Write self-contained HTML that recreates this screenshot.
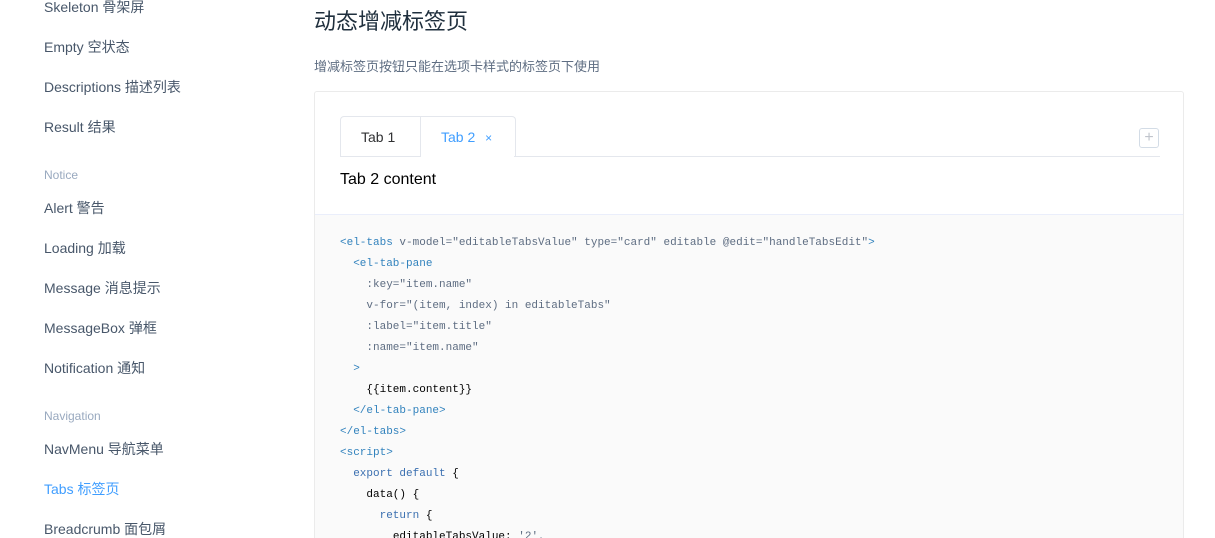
<!DOCTYPE html>
<html><head><meta charset="utf-8"><style>
html,body{margin:0;width:1215px;height:538px;overflow:hidden}
body{background:#fff;font-family:"Liberation Sans","Noto Sans CJK SC",sans-serif;position:relative}
.s{position:absolute;left:44px;font-size:14px;color:#48576a;line-height:20px}
.g{position:absolute;left:44px;font-size:12px;color:#99a9bf;line-height:16px}
.code{position:absolute;left:340px;top:233px;font-family:"Liberation Mono","DejaVu Sans Mono",monospace;font-size:11px;line-height:21px;color:#5e6d82;white-space:pre}
.t{color:#3182bd}.k{color:#3a6fb0}.b{color:#000}.v{color:#5e6d82}
</style></head><body>
<div class="s" style="top:-3px">Skeleton 骨架屏</div>
<div class="s" style="top:37px">Empty 空状态</div>
<div class="s" style="top:77px">Descriptions 描述列表</div>
<div class="s" style="top:117px">Result 结果</div>
<div class="g" style="top:167px">Notice</div>
<div class="s" style="top:198px">Alert 警告</div>
<div class="s" style="top:238px">Loading 加载</div>
<div class="s" style="top:278px">Message 消息提示</div>
<div class="s" style="top:318px">MessageBox 弹框</div>
<div class="s" style="top:358px">Notification 通知</div>
<div class="g" style="top:408px">Navigation</div>
<div class="s" style="top:439px">NavMenu 导航菜单</div>
<div class="s" style="top:479px;color:#409eff">Tabs 标签页</div>
<div class="s" style="top:519px">Breadcrumb 面包屑</div>

<div style="position:absolute;left:314px;top:6px;font-size:22px;color:#1f2f3d;line-height:32px">动态增减标签页</div>
<div style="position:absolute;left:314px;top:58px;font-size:13px;color:#5e6d82;line-height:18px">增减标签页按钮只能在选项卡样式的标签页下使用</div>

<div style="position:absolute;left:314px;top:91px;width:868px;height:460px;border:1px solid #ebebeb;border-radius:3px">
 <div style="position:absolute;left:0;top:122px;width:868px;height:340px;background:#fafafa;border-top:1px solid #eaeefb"></div>
 <div style="position:absolute;left:25px;top:64px;width:820px;height:1px;background:#e4e7ed"></div>
 <div style="position:absolute;left:25px;top:24px;width:174px;height:40px;border:1px solid #e4e7ed;border-bottom:none;border-radius:4px 4px 0 0"></div>
 <div style="position:absolute;left:105px;top:24px;width:1px;height:40px;background:#e4e7ed"></div>
 <div style="position:absolute;left:106px;top:64px;width:93px;height:1px;background:#fff"></div>
 <div style="position:absolute;left:46px;top:37px;font-size:14px;color:#303133">Tab 1</div>
 <div style="position:absolute;left:126px;top:37px;font-size:14px;color:#409eff">Tab 2 <span style="font-size:12px;margin-left:6px">×</span></div>
 <div style="position:absolute;left:824px;top:36px;width:18px;height:18px;border:1px solid #d3dce6;border-radius:3px;color:#c0c4cc;font-size:16px;line-height:18px;text-align:center">+</div>
 <div style="position:absolute;left:25px;top:79px;font-size:16px;color:#000">Tab 2 content</div>
</div>
<div class="code"><span class="t">&lt;el-tabs</span> v-model=<span class="v">"editableTabsValue"</span> type=<span class="v">"card"</span> editable @edit=<span class="v">"handleTabsEdit"</span><span class="t">&gt;</span>
  <span class="t">&lt;el-tab-pane</span>
    :key=<span class="v">"item.name"</span>
    v-for=<span class="v">"(item, index) in editableTabs"</span>
    :label=<span class="v">"item.title"</span>
    :name=<span class="v">"item.name"</span>
  <span class="t">&gt;</span>
    <span class="b">{{item.content}}</span>
  <span class="t">&lt;/el-tab-pane&gt;</span>
<span class="t">&lt;/el-tabs&gt;</span>
<span class="t">&lt;script&gt;</span>
  <span class="k">export default</span> <span class="b">{</span>
    <span class="b">data() {</span>
      <span class="k">return</span> <span class="b">{</span>
        <span class="b">editableTabsValue:</span> <span class="v">'2'</span>,</div>
</body></html>
